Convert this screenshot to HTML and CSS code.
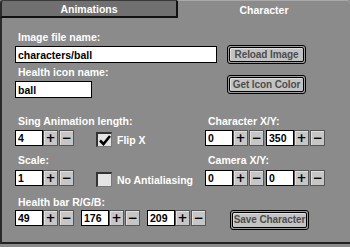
FILE: index.html
```html
<!doctype html>
<html>
<head>
    <link rel="stylesheet" href="styles.css">
</head>
<body>

<div class="tabs">
    <div class="tab tab-off">Animations</div>
    <div class="tab tab-on">Character</div>
</div>

<div class="panel">
    <div class="files">
        <div class="file-fields">
            <div class="label">Image file name:</div>
            <input class="text-field wide" type="text" value="characters/ball" readonly/>
            <div class="label">Health icon name:</div>
            <input class="text-field short" type="text" value="ball" readonly/>
        </div>
        <div class="file-buttons">
            <button class="mac-btn"><span>Reload Image</span></button>
            <button class="mac-btn gap-btn"><span>Get Icon Color</span></button>
        </div>
    </div>

    <div class="settings">
        <div class="left-col">
            <div class="label">Sing Animation length:</div>
            <div class="row">
                <div class="stepper">
                    <input class="num" type="text" value="4" readonly/>
                    <button class="step">+</button>
                    <button class="step">&minus;</button>
                </div>
                <div class="check">
                    <div class="box checked">
                        <svg width="12" height="11" viewBox="0 0 12 11"><path d="M1 5.5 L4.5 9 L11 1" fill="none" stroke="#000" stroke-width="2.6"/></svg>
                    </div>
                    <span>Flip X</span>
                </div>
            </div>
            <div class="label second">Scale:</div>
            <div class="row">
                <div class="stepper">
                    <input class="num" type="text" value="1" readonly/>
                    <button class="step">+</button>
                    <button class="step">&minus;</button>
                </div>
                <div class="check">
                    <div class="box"></div>
                    <span>No Antialiasing</span>
                </div>
            </div>
        </div>
        <div class="right-col">
            <div class="label">Character X/Y:</div>
            <div class="row pair">
                <div class="stepper">
                    <input class="num" type="text" value="0" readonly/>
                    <button class="step">+</button>
                    <button class="step">&minus;</button>
                </div>
                <div class="stepper">
                    <input class="num" type="text" value="350" readonly/>
                    <button class="step">+</button>
                    <button class="step">&minus;</button>
                </div>
            </div>
            <div class="label second">Camera X/Y:</div>
            <div class="row pair">
                <div class="stepper">
                    <input class="num" type="text" value="0" readonly/>
                    <button class="step">+</button>
                    <button class="step">&minus;</button>
                </div>
                <div class="stepper">
                    <input class="num" type="text" value="0" readonly/>
                    <button class="step">+</button>
                    <button class="step">&minus;</button>
                </div>
            </div>
        </div>
    </div>

    <div class="health">
        <div class="label">Health bar R/G/B:</div>
        <div class="row rgb">
            <div class="stepper">
                <input class="num" type="text" value="49" readonly/>
                <button class="step">+</button>
                <button class="step">&minus;</button>
            </div>
            <div class="stepper">
                <input class="num" type="text" value="176" readonly/>
                <button class="step">+</button>
                <button class="step">&minus;</button>
            </div>
            <div class="stepper">
                <input class="num" type="text" value="209" readonly/>
                <button class="step">+</button>
                <button class="step">&minus;</button>
            </div>
            <button class="mac-btn save-btn"><span>Save Character</span></button>
        </div>
    </div>
</div>

</body>
</html>
```

FILE: styles.css
```css
html, body {
    margin: 0;
    padding: 0;
}

body {
    width: 350px;
    height: 247px;
    overflow: hidden;
    background: #8b8b8b;
    font-family: "Liberation Sans", Arial, sans-serif;
    font-size: 10.5px;
    font-weight: bold;
    color: #fff;
}

.tabs {
    display: flex;
    height: 18px;
}

.tab {
    box-sizing: border-box;
    height: 18px;
    line-height: 18px;
    text-align: center;
    color: #fff;
}

.tab-off {
    width: 176px;
    background: #707070;
    border-top: 1px solid #3a3a3a;
    border-left: 2px solid #2a2a2a;
    border-bottom: 2px solid #111;
    border-top-left-radius: 3px;
    line-height: 16px;
}

.tab-on {
    flex: 1;
    background: #8b8b8b;
    border-top: 1px solid #a9a9a9;
    border-left: 2px solid #111;
    border-top-right-radius: 4px;
}

.panel {
    box-sizing: border-box;
    height: 226px;
    border-left: 2px solid #2a2a2a;
    border-bottom: 2px solid #222;
    padding: 13px 0 0 13px;
}

.label {
    height: 12px;
    line-height: 12px;
    padding-left: 3px;
    margin-bottom: 3px;
    white-space: nowrap;
}

.files {
    display: flex;
    align-items: flex-start;
}

.file-fields {
    display: flex;
    flex-direction: column;
    align-items: flex-start;
    width: 212px;
}

.text-field {
    box-sizing: border-box;
    height: 17px;
    border: 1px solid #000;
    background: #fff;
    padding: 0 2px;
    margin: 0 0 3px 0;
    font: inherit;
    color: #000;
    outline: none;
}

.wide {
    width: 202px;
}

.short {
    width: 77px;
}

.file-buttons {
    display: flex;
    flex-direction: column;
    margin-top: 14px;
}

.mac-btn {
    box-sizing: border-box;
    width: 79px;
    height: 19px;
    padding: 1px;
    border: 1px solid #000;
    border-radius: 3px;
    background: #9c9c9c;
    font: inherit;
    font-size: 10px;
    cursor: pointer;
}

.mac-btn span {
    display: block;
    box-sizing: border-box;
    height: 15px;
    line-height: 13px;
    border: 1px solid #000;
    border-radius: 2px;
    background: #c3c3c3;
    box-shadow: inset 1px 1px 0 #dedede;
    color: #4d4d4d;
    white-space: nowrap;
    overflow: visible;
    letter-spacing: -0.1px;
}

.gap-btn {
    margin-top: 11px;
}

.settings {
    display: flex;
    margin-top: 14px;
}

.left-col {
    width: 190px;
}

.second {
    margin-top: 8px;
    margin-bottom: 4px;
}

.row {
    display: flex;
    align-items: flex-start;
    height: 16px;
}

.pair {
    gap: 2px;
}

.stepper {
    display: flex;
    gap: 1px;
}

.num {
    box-sizing: border-box;
    width: 28px;
    height: 16px;
    margin: 0 -1px 0 0;
    border: 1px solid #000;
    background: #fff;
    padding: 0 2px;
    font: inherit;
    color: #000;
    outline: none;
}

.step {
    box-sizing: border-box;
    width: 15px;
    height: 16px;
    padding: 0;
    border: 1px solid #555;
    background: #c6c6c6;
    box-shadow: inset 1px 1px 0 #e0e0e0;
    font-family: "DejaVu Sans", sans-serif;
    font-size: 12px;
    font-weight: bold;
    line-height: 13px;
    color: #000;
}

.check {
    display: flex;
    align-items: center;
    margin-left: 22px;
    margin-top: 2px;
}

.box {
    box-sizing: border-box;
    width: 16px;
    height: 15px;
    display: flex;
    align-items: center;
    justify-content: center;
    background: #e4e4e4;
    border-top: 2px solid #333;
    border-left: 2px solid #333;
    border-right: 1px solid #777;
    border-bottom: 1px solid #777;
}

.check span {
    margin-left: 5px;
    white-space: nowrap;
}

.health {
    margin-top: 10px;
}

.health .label {
    margin-bottom: 2px;
}

.rgb {
    gap: 7px;
}

.save-btn {
    height: 20px;
    margin-left: 17px;
}

.save-btn span {
    height: 16px;
    line-height: 14px;
}
```
